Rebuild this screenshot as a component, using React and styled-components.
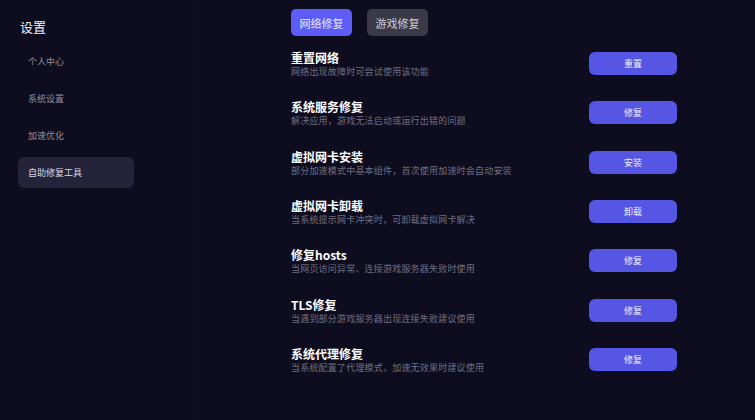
import React, { useState } from "react";
import styled, { createGlobalStyle } from "styled-components";

const Global = createGlobalStyle`
  html, body { margin: 0; padding: 0; background: #0e0d1f; }
  body { font-family: "Noto Sans CJK SC", "Noto Sans", sans-serif; }
  * { box-sizing: border-box; }
`;

const Page = styled.div`
  display: flex;
  width: 755px;
  height: 420px;
  background: #0e0d1f;
  overflow: hidden;
`;

const Sidebar = styled.aside`
  width: 198px;
  flex-shrink: 0;
  border-right: 1px solid #141327;
  padding: 18px 0 0 18px;
  display: flex;
  flex-direction: column;
`;

const SideTitle = styled.div`
  color: #f2f2f6;
  font-size: 13px;
  line-height: 18px;
  padding-left: 2px;
  margin-bottom: 10px;
`;

const MenuItem = styled.div`
  width: 116px;
  height: 31px;
  display: flex;
  align-items: center;
  padding-left: 10px;
  margin-bottom: 6px;
  border-radius: 6px;
  font-size: 9px;
  color: ${(p) => (p.$active ? "#d8d8e2" : "#8e8e9e")};
  background: ${(p) => (p.$active ? "#24233a" : "transparent")};
`;

const Main = styled.main`
  flex: 1;
  padding: 9px 0 0 93px;
  display: flex;
  flex-direction: column;
`;

const Tabs = styled.div`
  display: flex;
  gap: 15px;
  margin-bottom: 14px;
`;

const Tab = styled.div`
  width: 61px;
  height: 27px;
  border-radius: 5px;
  display: flex;
  align-items: center;
  justify-content: center;
  font-size: 11px;
  color: ${(p) => (p.$active ? "#e8e8ff" : "#d0d0d8")};
  background: ${(p) => (p.$active ? "#5c5cf6" : "#3a3947")};
`;

const List = styled.div`
  width: 386px;
  display: flex;
  flex-direction: column;
`;

const Row = styled.div`
  height: 49.33px;
  display: flex;
  align-items: flex-start;
  justify-content: space-between;
`;

const Info = styled.div`
  display: flex;
  flex-direction: column;
`;

const Title = styled.div`
  color: #ffffff;
  font-size: 12px;
  font-weight: 700;
  line-height: 15px;
`;

const Desc = styled.div`
  color: #6f6f82;
  font-size: 9px;
  line-height: 13px;
  letter-spacing: 0.2px;
`;

const ActionButton = styled.button`
  width: 88px;
  height: 23px;
  margin-top: 2px;
  border: none;
  border-radius: 6px;
  background: #5556e3;
  color: #f0f0ff;
  font-family: inherit;
  font-size: 9px;
  cursor: pointer;
`;

const menu = ["个人中心", "系统设置", "加速优化", "自助修复工具"];

const items = [
  { title: "重置网络", desc: "网络出现故障时可尝试使用该功能", action: "重置" },
  { title: "系统服务修复", desc: "解决应用，游戏无法启动或运行出错的问题", action: "修复" },
  { title: "虚拟网卡安装", desc: "部分加速模式中基本组件，首次使用加速时会自动安装", action: "安装" },
  { title: "虚拟网卡卸载", desc: "当系统提示网卡冲突时，可卸载虚拟网卡解决", action: "卸载" },
  { title: "修复hosts", desc: "当网页访问异常、连接游戏服务器失败时使用", action: "修复" },
  { title: "TLS修复", desc: "当遇到部分游戏服务器出现连接失败建议使用", action: "修复" },
  { title: "系统代理修复", desc: "当系统配置了代理模式，加速无效果时建议使用", action: "修复" },
];

export default function App() {
  const [tab, setTab] = useState(0);
  return (
    <Page>
      <Global />
      <Sidebar>
        <SideTitle>设置</SideTitle>
        {menu.map((m, i) => (
          <MenuItem key={m} $active={i === 3}>
            {m}
          </MenuItem>
        ))}
      </Sidebar>
      <Main>
        <Tabs>
          {["网络修复", "游戏修复"].map((t, i) => (
            <Tab key={t} $active={tab === i} onClick={() => setTab(i)}>
              {t}
            </Tab>
          ))}
        </Tabs>
        <List>
          {items.map((it) => (
            <Row key={it.title}>
              <Info>
                <Title>{it.title}</Title>
                <Desc>{it.desc}</Desc>
              </Info>
              <ActionButton>{it.action}</ActionButton>
            </Row>
          ))}
        </List>
      </Main>
    </Page>
  );
}
